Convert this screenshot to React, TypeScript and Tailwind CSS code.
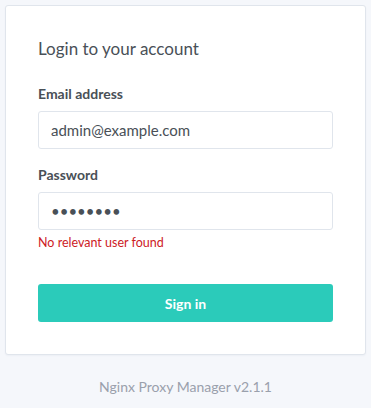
import React from 'react';

export default function App() {
    return (
        <div className="min-h-[408px] bg-[#f5f7fb] px-[5px] pt-[5px] font-['Lato','Noto_Sans',sans-serif] text-[#495057]">
            <div className="bg-white border border-[#e0e5ec] rounded-[3px] px-[32px] pt-[30px] pb-[32px] shadow-[0_1px_2px_rgba(0,40,100,0.04)]">
                <h2 className="text-[17px] leading-[26px] text-[#495057] mb-[22px]">Login to your account</h2>

                <div className="mb-[16px]">
                    <label className="block text-[14px] font-bold leading-[20px] mb-[7px]">Email address</label>
                    <input
                        type="email"
                        defaultValue="admin@example.com"
                        className="w-full h-[38px] px-[12px] border border-[#e0e5ec] rounded-[3px] text-[15px] text-[#495057] outline-none"
                    />
                </div>

                <div>
                    <label className="block text-[14px] font-bold leading-[20px] mb-[7px] mt-[1px]">Password</label>
                    <input
                        type="password"
                        defaultValue="password"
                        className="w-full h-[38px] px-[12px] border border-[#e0e5ec] rounded-[3px] text-[15px] text-[#495057] outline-none"
                    />
                    <div className="text-[12.5px] leading-[20px] text-[#cd201f] mt-[3px]">No relevant user found</div>
                </div>

                <button className="mt-[31px] w-full h-[38px] rounded-[3px] bg-[#2bcbba] text-white text-[14px] font-bold">
                    Sign in
                </button>
            </div>
            <div className="text-center text-[14px] text-[#9aa0ac] mt-[21px]">Nginx Proxy Manager v2.1.1</div>
        </div>
    );
}
